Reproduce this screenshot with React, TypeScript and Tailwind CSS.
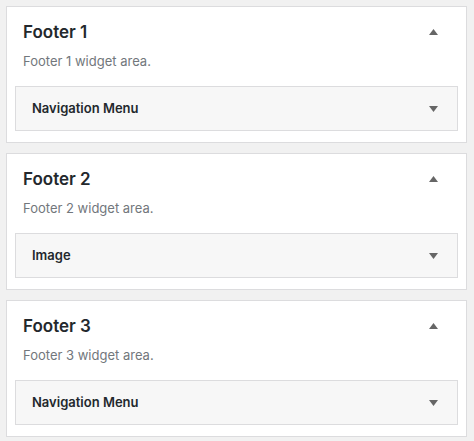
const areas = [
  { title: "Footer 1", description: "Footer 1 widget area.", widget: "Navigation Menu" },
  { title: "Footer 2", description: "Footer 2 widget area.", widget: "Image" },
  { title: "Footer 3", description: "Footer 3 widget area.", widget: "Navigation Menu" },
];

function Triangle({ up }: { up?: boolean }) {
  return (
    <svg width="9" height="6" viewBox="0 0 9 6" className="fill-[#666]">
      {up ? <path d="M4.5 0 9 6H0z" /> : <path d="M0 0h9L4.5 6z" />}
    </svg>
  );
}

function WidgetArea({ title, description, widget }: (typeof areas)[number]) {
  return (
    <div className="h-[137px] border border-[#dcdcde] bg-white px-2 pt-[13px]">
      <div className="flex items-center justify-between pl-2 pr-[20px]">
        <h3 className="text-[17px] leading-6 font-semibold text-[#23282d]">{title}</h3>
        <Triangle up />
      </div>
      <p className="mt-[7px] pl-2 text-[13px] leading-5 text-[#72777c]">{description}</p>
      <div className="mt-[15px] flex h-[45px] items-center justify-between border border-[#dcdcde] bg-[#f7f7f7] pl-4 pr-[19px]">
        <span className="text-[13px] font-semibold text-[#23282d]">{widget}</span>
        <Triangle />
      </div>
    </div>
  );
}

export default function App() {
  return (
    <div
      className="flex min-h-[441px] flex-col gap-[10px] bg-[#f1f1f1] pt-[6px] pl-[6px] pr-[7px]"
      style={{ fontFamily: "Inter, 'Noto Sans', sans-serif" }}
    >
      {areas.map((area) => (
        <WidgetArea key={area.title} {...area} />
      ))}
    </div>
  );
}
